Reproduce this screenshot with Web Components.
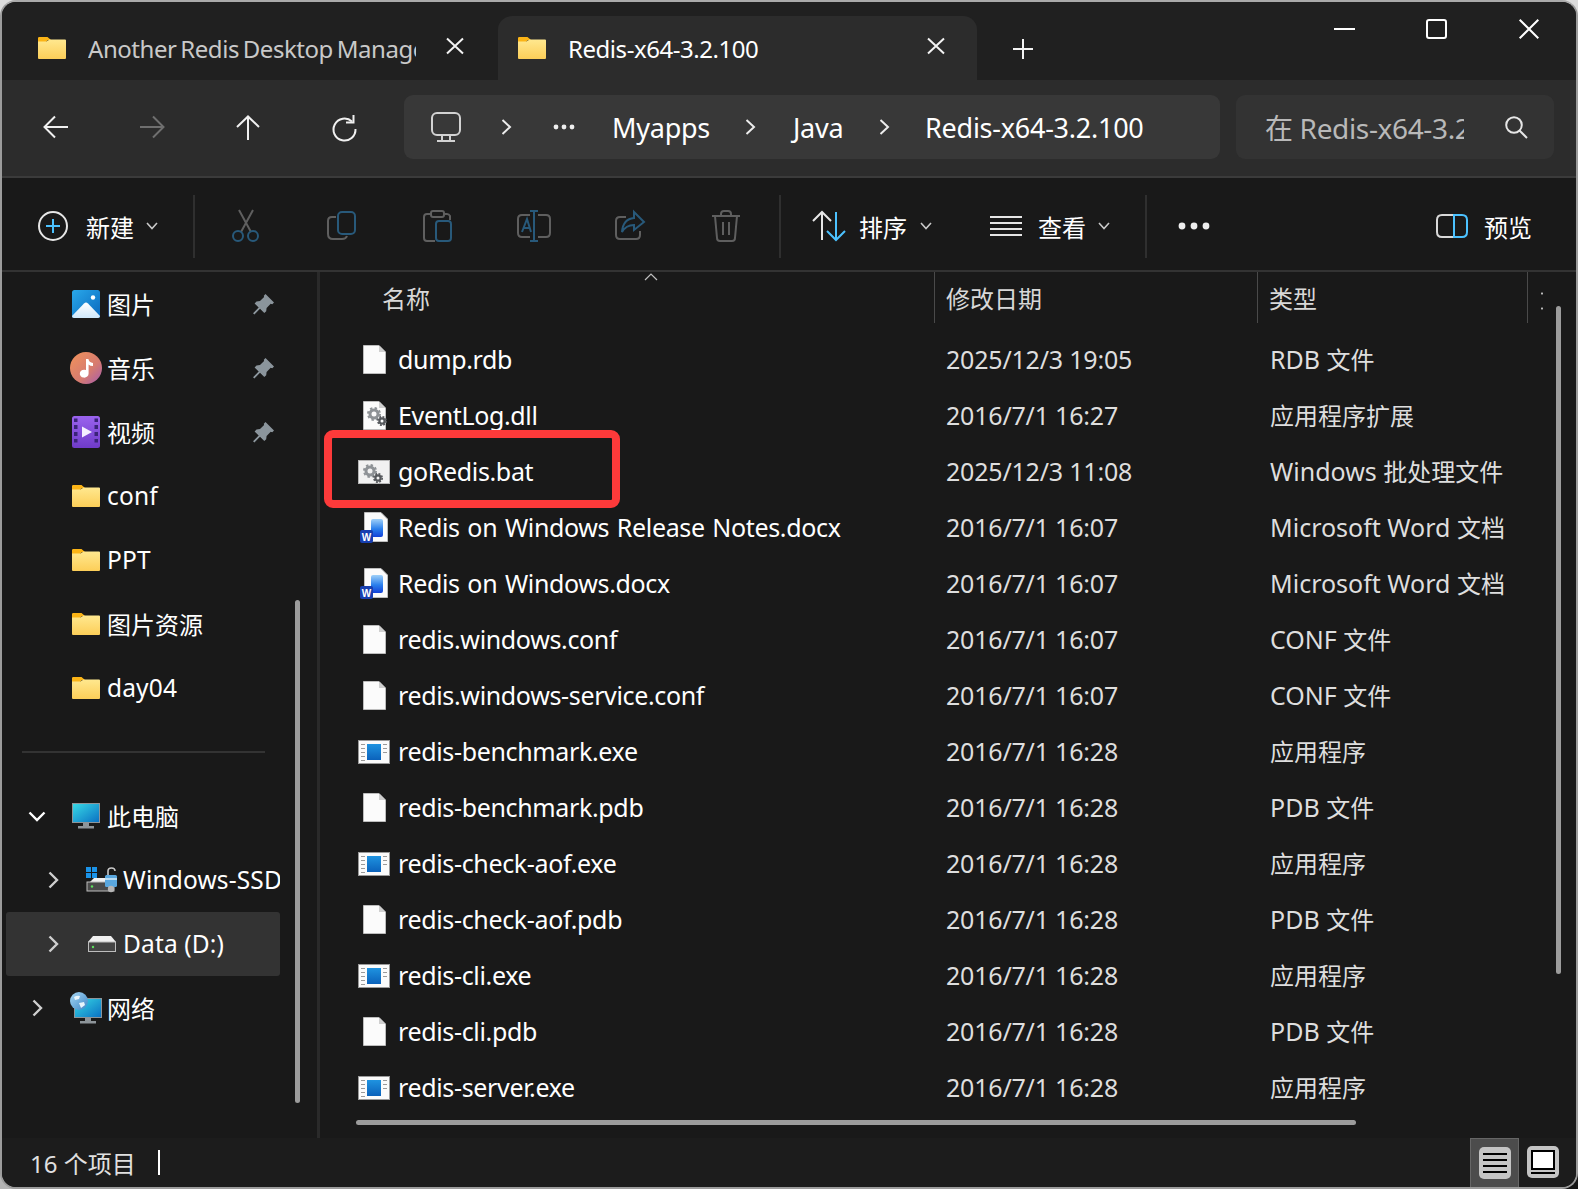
<!DOCTYPE html>
<html lang="zh">
<head>
<meta charset="utf-8">
<title>Redis-x64-3.2.100</title>
<style>
  html, body { margin: 0; height: 100%; }
  body {
    font-family: "Noto Sans", "Noto Sans CJK SC", sans-serif;
    overflow: hidden;
    background:
      linear-gradient(#161616, #161616) right bottom / 20px 20px no-repeat,
      linear-gradient(#b4b4b4, #b4b4b4) left bottom / 20px 20px no-repeat,
      #dcdcdc;
  }
</style>
</head>
<body>
<app-window>
  <title-bar>
    <tab-item slot="tabs">Another Redis Desktop Manager</tab-item>
    <tab-item slot="tabs" active>Redis-x64-3.2.100</tab-item>
  </title-bar>
  <nav-bar></nav-bar>
  <command-bar></command-bar>
  <div slot="body-side">
    <side-bar>
      <side-item icon="pictures" pinned>图片</side-item>
      <side-item icon="music" pinned>音乐</side-item>
      <side-item icon="video" pinned>视频</side-item>
      <side-item icon="folder">conf</side-item>
      <side-item icon="folder">PPT</side-item>
      <side-item icon="folder">图片资源</side-item>
      <side-item icon="folder">day04</side-item>
      <side-item slot="lower" icon="pc" chevron="down">此电脑</side-item>
      <side-item slot="lower" icon="ssd" chevron="right" level="1">Windows-SSD (C:)</side-item>
      <side-item slot="lower" icon="drive" chevron="right" level="1" selected>Data (D:)</side-item>
      <side-item slot="lower" icon="network" chevron="right">网络</side-item>
    </side-bar>
  </div>
  <file-list slot="body-main">
    <file-row icon="blank" date="2025/12/3 19:05" kind="RDB 文件">dump.rdb</file-row>
    <file-row icon="dll" date="2016/7/1 16:27" kind="应用程序扩展">EventLog.dll</file-row>
    <file-row icon="bat" date="2025/12/3 11:08" kind="Windows 批处理文件">goRedis.bat</file-row>
    <file-row icon="word" date="2016/7/1 16:07" kind="Microsoft Word 文档">Redis on Windows Release Notes.docx</file-row>
    <file-row icon="word" date="2016/7/1 16:07" kind="Microsoft Word 文档">Redis on Windows.docx</file-row>
    <file-row icon="blank" date="2016/7/1 16:07" kind="CONF 文件">redis.windows.conf</file-row>
    <file-row icon="blank" date="2016/7/1 16:07" kind="CONF 文件">redis.windows-service.conf</file-row>
    <file-row icon="exe" date="2016/7/1 16:28" kind="应用程序">redis-benchmark.exe</file-row>
    <file-row icon="blank" date="2016/7/1 16:28" kind="PDB 文件">redis-benchmark.pdb</file-row>
    <file-row icon="exe" date="2016/7/1 16:28" kind="应用程序">redis-check-aof.exe</file-row>
    <file-row icon="blank" date="2016/7/1 16:28" kind="PDB 文件">redis-check-aof.pdb</file-row>
    <file-row icon="exe" date="2016/7/1 16:28" kind="应用程序">redis-cli.exe</file-row>
    <file-row icon="blank" date="2016/7/1 16:28" kind="PDB 文件">redis-cli.pdb</file-row>
    <file-row icon="exe" date="2016/7/1 16:28" kind="应用程序">redis-server.exe</file-row>
  </file-list>
  <status-bar slot="status"></status-bar>
</app-window>

<script>
const gears = `
  <circle cx="11" cy="13" r="4" fill="none" stroke="#8e9296" stroke-width="3"/>
  <circle cx="11" cy="13" r="6" fill="none" stroke="#8e9296" stroke-width="2" stroke-dasharray="2.4 2.3"/>
  <circle cx="19" cy="20" r="2.6" fill="none" stroke="#55585c" stroke-width="2.2"/>
  <circle cx="19" cy="20" r="4.2" fill="none" stroke="#55585c" stroke-width="1.6" stroke-dasharray="1.9 1.4"/>`;
const page = (inner) => `<svg width="23" height="29" viewBox="0 0 23 29">
  <path d="M.5.5H16L22.5 7V28.5H.5Z" fill="#fbfbfb" stroke="#bdbdbd"/>
  <path d="M16 .5V7H22.5Z" fill="#cfcfcf"/>${inner}</svg>`;
const folderGrad = `<defs><linearGradient id="f" x1="0" y1="0" x2="0" y2="1"><stop offset="0" stop-color="#ffe88f"/><stop offset="1" stop-color="#fcce58"/></linearGradient></defs>`;

const ICONS = {
  folder: `<svg width="28" height="22" viewBox="0 0 28 22">${folderGrad}
    <path d="M0 1.2Q0 0 1.2 0H9.5L13 3H10L8 5H0Z" fill="#fbb416"/>
    <path d="M0 4.5H8.5L11.5 2.5H27Q28 2.5 28 3.5V21Q28 22 27 22H1Q0 22 0 21Z" fill="url(#f)"/></svg>`,
  close: `<svg width="18" height="16" viewBox="0 0 18 16"><path d="M1 .5L17 15.5M17 .5L1 15.5" stroke="#f2f2f2" stroke-width="2" fill="none"/></svg>`,
  plus: `<svg width="20" height="20" viewBox="0 0 20 20"><path d="M10 0V20M0 10H20" stroke="#f2f2f2" stroke-width="2"/></svg>`,
  min: `<svg width="21" height="2" viewBox="0 0 21 2"><rect width="21" height="2" fill="#fff"/></svg>`,
  max: `<svg width="21" height="20" viewBox="0 0 21 20"><rect x="1" y="1" width="19" height="18" rx="2" fill="none" stroke="#fff" stroke-width="2"/></svg>`,
  winclose: `<svg width="20" height="20" viewBox="0 0 20 20"><path d="M.7.7L19.3 19.3M19.3.7L.7 19.3" stroke="#fff" stroke-width="2" fill="none"/></svg>`,
  back: `<svg width="26" height="24" viewBox="0 0 26 24"><path d="M12 1.5L1.5 12L12 22.5M1.5 12H25" fill="none" stroke="#f0f0f0" stroke-width="2"/></svg>`,
  forward: `<svg width="26" height="24" viewBox="0 0 26 24"><path d="M14 1.5L24.5 12L14 22.5M24.5 12H1" fill="none" stroke="#6f6f6f" stroke-width="2"/></svg>`,
  up: `<svg width="24" height="25" viewBox="0 0 24 25"><path d="M1 12L12 1.5L23 12M12 1.5V25" fill="none" stroke="#f0f0f0" stroke-width="2"/></svg>`,
  refresh: `<svg width="25" height="25" viewBox="0 0 25 25"><path d="M20 6.5A11 11 0 1 0 23.5 14" fill="none" stroke="#f0f0f0" stroke-width="2"/><path d="M21.5 0V7.5H14" fill="none" stroke="#f0f0f0" stroke-width="2"/></svg>`,
  monitor: `<svg width="30" height="30" viewBox="0 0 30 30"><rect x="1" y="1" width="28" height="22" rx="5" fill="none" stroke="#d2d2d2" stroke-width="2"/><path d="M11 23V28M19 23V28M6 29H24" fill="none" stroke="#d2d2d2" stroke-width="2"/></svg>`,
  crumb: `<svg width="11" height="16" viewBox="0 0 11 16"><path d="M1.5 1L9 8L1.5 15" fill="none" stroke="#ececec" stroke-width="2"/></svg>`,
  ell: `<svg width="22" height="6" viewBox="0 0 22 6"><circle cx="3" cy="3" r="2.4" fill="#eee"/><circle cx="11" cy="3" r="2.4" fill="#eee"/><circle cx="19" cy="3" r="2.4" fill="#eee"/></svg>`,
  search: `<svg width="23" height="23" viewBox="0 0 23 23"><circle cx="9" cy="9" r="7.8" fill="none" stroke="#e6e6e6" stroke-width="2"/><path d="M14.5 14.5L22 22" stroke="#e6e6e6" stroke-width="2"/></svg>`,
  add: `<svg width="30" height="30" viewBox="0 0 30 30"><circle cx="15" cy="15" r="14" fill="none" stroke="#e6e6e6" stroke-width="2"/><path d="M15 8V22M8 15H22" stroke="#4cc2ff" stroke-width="2"/></svg>`,
  drop: `<svg width="12" height="8" viewBox="0 0 12 8"><path d="M1 1L6 6.5L11 1" fill="none" stroke="#c8c8c8" stroke-width="1.6"/></svg>`,
  cut: `<svg width="30" height="32" viewBox="0 0 30 32"><path d="M8 0L20 22M22 0L10 22" fill="none" stroke="#5f5f5f" stroke-width="2"/><circle cx="7" cy="26" r="5" fill="none" stroke="#28597a" stroke-width="2"/><circle cx="22" cy="26" r="5" fill="none" stroke="#28597a" stroke-width="2"/></svg>`,
  copy: `<svg width="30" height="30" viewBox="0 0 30 30"><path d="M9 6H5Q1 6 1 10V23Q1 28 6 28H15Q19 28 20 25" fill="none" stroke="#5f5f5f" stroke-width="2"/><rect x="11" y="1" width="17" height="22" rx="4" fill="none" stroke="#28597a" stroke-width="2"/></svg>`,
  paste: `<svg width="30" height="32" viewBox="0 0 30 32"><path d="M8 4H4Q1 4 1 7V28Q1 31 4 31H12M21 4H24Q26 4 27 6V10" fill="none" stroke="#5f5f5f" stroke-width="2"/><rect x="8" y="1" width="13" height="6" rx="2" fill="none" stroke="#5f5f5f" stroke-width="2"/><rect x="13" y="11" width="15" height="20" rx="3" fill="none" stroke="#28597a" stroke-width="2"/></svg>`,
  rename: `<svg width="34" height="32" viewBox="0 0 34 32"><path d="M13 5H5Q1 5 1 9V23Q1 27 5 27H13M21 5H29Q33 5 33 9V23Q33 27 29 27H21" fill="none" stroke="#5f5f5f" stroke-width="2"/><path d="M17 1V31M13 1H21M13 31H21M5 22L10 9L14 22M6.5 18H13" fill="none" stroke="#28597a" stroke-width="2"/></svg>`,
  share: `<svg width="30" height="30" viewBox="0 0 30 30"><path d="M11 6H5Q1 6 1 10V24Q1 28 5 28H21Q25 28 25 24V20" fill="none" stroke="#5f5f5f" stroke-width="2"/><path d="M19 1L29 11L19 19V14Q11 14 7 21Q8 8 19 7Z" fill="none" stroke="#28597a" stroke-width="2"/></svg>`,
  trash: `<svg width="30" height="32" viewBox="0 0 30 32"><path d="M1 6H29M10 6V4Q10 1 13 1H17Q20 1 20 4V6M4 6L6 28Q6 31 9 31H21Q24 31 24 28L26 6M12 12V25M18 12V25" fill="none" stroke="#5f5f5f" stroke-width="2"/></svg>`,
  sort: `<svg width="34" height="30" viewBox="0 0 34 30"><path d="M1 10L10 1L19 10M10 1V29" fill="none" stroke="#e6e6e6" stroke-width="2"/><path d="M15 20L24 29L33 20M24 1V29" fill="none" stroke="#4cc2ff" stroke-width="2"/></svg>`,
  lines: `<svg width="32" height="20" viewBox="0 0 32 20"><path d="M0 1H32M0 7H32M0 13H32M0 19H32" stroke="#e6e6e6" stroke-width="2"/></svg>`,
  dots: `<svg width="32" height="8" viewBox="0 0 32 8"><circle cx="4" cy="4" r="3.4" fill="#eee"/><circle cx="16" cy="4" r="3.4" fill="#eee"/><circle cx="28" cy="4" r="3.4" fill="#eee"/></svg>`,
  preview: `<svg width="32" height="24" viewBox="0 0 32 24"><path d="M18 1H6Q1 1 1 6V18Q1 23 6 23H18" fill="none" stroke="#d8d8d8" stroke-width="2"/><path d="M18 0V24M18 1H26Q31 1 31 6V18Q31 23 26 23H18" fill="none" stroke="#4cc2ff" stroke-width="2"/></svg>`,
  pin: `<svg width="21" height="21" viewBox="0 0 21 21"><path d="M12.5 0L21 8.5L19.3 10.2L17.7 9.8L13.6 13.9L13.2 17.2L11.3 19.1L7 14.8L1.4 20.6L0 19.3L5.7 13.5L1.6 9.4L3.5 7.5L7 7.1L11.1 3L10.8 1.7Z" fill="#8b959c"/></svg>`,
  pictures: `<svg width="28" height="28" viewBox="0 0 28 28"><defs><linearGradient id="p" x1="0" y1="0" x2="1" y2="1"><stop offset="0" stop-color="#29a8ea"/><stop offset="1" stop-color="#0a68bd"/></linearGradient><linearGradient id="s" x1="0" y1="0" x2="0" y2="1"><stop offset="0" stop-color="#fff"/><stop offset="1" stop-color="#cfe8fb"/></linearGradient></defs>
    <rect width="28" height="28" rx="2.5" fill="url(#p)"/><circle cx="21" cy="7.5" r="2.2" fill="#fff"/><path d="M0 26L12 13.5Q14 11.5 16 13.5L28 26V26Q28 28 26 28H2Q0 28 0 26Z" fill="url(#s)"/></svg>`,
  music: `<svg width="32" height="32" viewBox="0 0 32 32"><defs><linearGradient id="m" x1="0" y1="0" x2="1" y2="1"><stop offset="0" stop-color="#f2935a"/><stop offset=".6" stop-color="#d67b70"/><stop offset="1" stop-color="#a45bb0"/></linearGradient></defs>
    <circle cx="16" cy="16" r="16" fill="url(#m)"/><path d="M16 7H18.4Q19 10.5 23 11V14Q20 14 18.6 12.5V21.5A4.4 4 0 1 1 16 18Z" fill="#fff"/></svg>`,
  video: `<svg width="28" height="32" viewBox="0 0 28 32"><defs><linearGradient id="v" x1="0" y1="0" x2="0" y2="1"><stop offset="0" stop-color="#9a63ee"/><stop offset="1" stop-color="#6f3bc8"/></linearGradient></defs>
    <rect width="28" height="32" rx="2.5" fill="url(#v)"/>
    <path d="M2 2.5H5.5V6H2ZM2 9H5.5V13H2ZM2 16H5.5V20H2ZM2 23H5.5V26.5H2ZM22.5 2.5H26V6H22.5ZM22.5 9H26V13H22.5ZM22.5 16H26V20H22.5ZM22.5 23H26V26.5H22.5Z" fill="#3a2378"/>
    <path d="M10 10.5L20 16L10 21.5Z" fill="#f4f0ff"/></svg>`,
  pc: `<svg width="28" height="26" viewBox="0 0 28 26"><defs><linearGradient id="c" x1="0" y1="0" x2="1" y2="1"><stop offset="0" stop-color="#38dbe6"/><stop offset="1" stop-color="#0a6fc2"/></linearGradient></defs>
    <rect x=".5" y=".5" width="27" height="19" fill="url(#c)" stroke="#8d9499"/><path d="M11 20H17V23H22V25.5H6V23H11Z" fill="#8d9499"/></svg>`,
  ssd: `<svg width="32" height="26" viewBox="0 0 32 26"><path d="M4 15L8 11H24V15Z" fill="#f0f0f0"/><rect x="1" y="15" width="27" height="9" fill="#4a4a4a" stroke="#bdbdbd"/><circle cx="6" cy="19.5" r="1.2" fill="#5ee05e"/>
    <path d="M0 0H5V5H0ZM6 0H11V5H6ZM0 6H5V11H0ZM6 6H11V11H6Z" fill="#1b93e8"/>
    <path d="M22 8V4Q22 1 25.5 1Q29 1 29 4" fill="none" stroke="#c8c8c8" stroke-width="1.6"/><rect x="19" y="8" width="12" height="12" rx="1.5" fill="#5aa7de"/><path d="M19 12H31" stroke="#d8ecfa" stroke-width="1.4"/><circle cx="25" cy="22" r="3.2" fill="#b5b5b5"/></svg>`,
  drive: `<svg width="28" height="16" viewBox="0 0 28 16"><path d="M0 6L5 0H23L28 6Z" fill="#f0f0f0"/><rect x=".5" y="6" width="27" height="9.5" fill="#444" stroke="#bdbdbd"/><circle cx="5" cy="11" r="1.2" fill="#5ee05e"/></svg>`,
  network: `<svg width="32" height="32" viewBox="0 0 32 32"><defs><linearGradient id="c" x1="0" y1="0" x2="1" y2="1"><stop offset="0" stop-color="#38dbe6"/><stop offset="1" stop-color="#0a6fc2"/></linearGradient><linearGradient id="g" x1="0" y1="0" x2="1" y2="1"><stop offset="0" stop-color="#a8d8f5"/><stop offset="1" stop-color="#3d86c6"/></linearGradient></defs>
    <rect x="4.5" y="6.5" width="27" height="19" fill="url(#c)" stroke="#8d9499"/><path d="M15 26H21V29H26V31.5H10V29H15Z" fill="#8d9499"/>
    <circle cx="9" cy="9" r="9" fill="url(#g)"/><path d="M4 5Q7 3 10 4L9 7L5 8ZM9 11L14 10L15 13L11 16Z" fill="#e9f5fc"/></svg>`,
  blank: page(''),
  dll: page(gears),
  bat: `<svg width="32" height="24" viewBox="0 0 32 24"><rect x=".5" y=".5" width="31" height="23" fill="#f1f1f1" stroke="#b5b5b5"/><g transform="translate(1 -2)">${gears}</g></svg>`,
  word: `<svg width="28" height="31" viewBox="0 0 28 31"><defs><linearGradient id="b" x1="0" y1="0" x2="0" y2="1"><stop offset="0" stop-color="#9fd0f8"/><stop offset=".55" stop-color="#2a7fec"/><stop offset="1" stop-color="#1340d8"/></linearGradient></defs>
    <path d="M4.5.5H21L27.5 7V29.5H4.5Z" fill="#fbfbfb" stroke="#bdbdbd"/>
    <rect x="11" y="7" width="12" height="18" rx="2" fill="url(#b)"/>
    <rect x="0" y="18" width="13" height="13" rx="2" fill="#173fb0"/>
    <text x="6.5" y="28.5" text-anchor="middle" font-family="Liberation Sans" font-weight="700" font-size="10" fill="#fff">W</text></svg>`,
  exe: `<svg width="32" height="24" viewBox="0 0 32 24"><rect x=".5" y=".5" width="31" height="23" fill="#fbfbfb" stroke="#9a9a9a"/>
    <defs><linearGradient id="e" x1="0" y1="0" x2="0" y2="1"><stop offset="0" stop-color="#1f93e0"/><stop offset="1" stop-color="#0b62bb"/></linearGradient></defs>
    <rect x="9" y="4" width="14" height="16" fill="url(#e)"/>
    <path d="M3 4.5H7M3 8.5H7M3 12.5H7M3 16.5H7M3 20.5H7M25 4.5H29M25 8.5H29M25 12.5H29" stroke="#9a9a9a" stroke-width="1.2"/></svg>`,
  detail: `<svg width="32" height="32" viewBox="0 0 32 32"><rect width="32" height="32" rx="5" fill="#c4c4c4"/><path d="M4 7H28M4 13H28M4 19H28M4 25H28" stroke="#000" stroke-width="2"/></svg>`,
  large: `<svg width="32" height="32" viewBox="0 0 32 32"><rect width="32" height="32" rx="5" fill="#c4c4c4"/><rect x="5" y="5" width="22" height="18" fill="#fff" stroke="#000" stroke-width="2"/><path d="M4 27H28" stroke="#000" stroke-width="2"/></svg>`
};

customElements.define("win-icon", class extends HTMLElement {
  constructor() {
    super();
    this.attachShadow({ mode: 'open' });
  }
  connectedCallback() {
    this.shadowRoot.innerHTML = `
      <style>:host { display: inline-flex; flex: none; align-items: center; justify-content: center; }
      svg { display: block; overflow: visible; }</style>
      ${ICONS[this.getAttribute('name')] || ''}`;
  }
});

customElements.define("app-window", class extends HTMLElement {
  constructor() {
    super();
    this.attachShadow({ mode: 'open' }).innerHTML = `
      <style>
      :host {
        display: flex;
        flex-direction: column;
        width: 1578px;
        height: 1189px;
        box-sizing: border-box;
        border: 2px solid #9c9c9c;
        border-top-color: #aaa;
        border-radius: 16px;
        background: #191919;
        color: #fff;
        overflow: hidden;
      }
      .body { flex: 1; display: flex; min-height: 0; }
      </style>
      <slot></slot>
      <div class="body"><slot name="body-side"></slot><slot name="body-main"></slot></div>
      <slot name="status"></slot>`;
  }
});

customElements.define("tab-item", class extends HTMLElement {
  constructor() {
    super();
    this.attachShadow({ mode: 'open' }).innerHTML = `
      <style>
      :host {
        display: flex;
        align-items: center;
        box-sizing: border-box;
        width: 479px;
        height: 64px;
        padding: 0 0 0 19px;
        font-size: 24px;
        letter-spacing: var(--track);
        word-spacing: -2px;
        color: #c9c9c9;
      }
      :host([active]) {
        background: #2c2c2c;
        border-radius: 14px 14px 0 0;
        color: #fff;
        padding-left: 20px;
      }
      .label { width: 328px; margin: 0 30px 0 22px; white-space: nowrap; overflow: hidden; }
      :host([active]) .label { margin-right: 31px; }
      win-icon[name=close] { margin-top: -4px; }
      </style>
      <win-icon name="folder"></win-icon>
      <span class="label"><slot></slot></span>
      <win-icon name="close"></win-icon>`;
  }
});

customElements.define("title-bar", class extends HTMLElement {
  constructor() {
    super();
    this.attachShadow({ mode: 'open' }).innerHTML = `
      <style>
      :host {
        display: flex;
        flex: none;
        height: 78px;
        box-sizing: border-box;
        padding: 14px 0 0 17px;
        background: #202020;
        --track: -.45px;
      }
      .plus { margin: 23px 0 0 36px; align-self: flex-start; }
      .controls { margin-left: auto; display: flex; align-items: flex-start; margin-top: 3px; }
      .controls win-icon { height: 20px; width: 92px; }
      .controls win-icon:last-child { margin: 0 1px 0 1px; }
      </style>
      <slot name="tabs"></slot>
      <win-icon class="plus" name="plus"></win-icon>
      <div class="controls">
        <win-icon name="min"></win-icon>
        <win-icon name="max"></win-icon>
        <win-icon name="winclose"></win-icon>
      </div>`;
  }
});

customElements.define("nav-bar", class extends HTMLElement {
  constructor() {
    super();
    this.attachShadow({ mode: 'open' }).innerHTML = `
      <style>
      :host {
        display: flex;
        flex: none;
        align-items: center;
        height: 98px;
        box-sizing: border-box;
        padding: 0 0 2px 6px;
        background: #2c2c2c;
        border-bottom: 2px solid #3b3b3b;
      }
      .btn { width: 96px; display: flex; justify-content: center; }
      .address, .search {
        height: 64px;
        display: flex;
        align-items: center;
        box-sizing: border-box;
        border-radius: 9px;
        font-size: 27px;
        letter-spacing: -.25px;
      }
      .address { width: 816px; margin-left: 12px; padding-left: 27px; background: #383838; color: #fff; }
      .address .chev { margin-left: 40px; }
      .address .ell { margin: 0 37px 0 41px; }
      .crumb { white-space: nowrap; }
      .crumb.a { width: 133px; }
      .crumb.b { width: 86px; }
      .next.a { margin-right: 37px; }
      .next.b { margin-right: 35px; }
      .search { width: 318px; margin-left: 16px; padding-left: 29px; background: #333; color: #b9b9b9; font-size: 28px; letter-spacing: -.35px; }
      .search span { width: 199px; overflow: hidden; white-space: nowrap; }
      .search win-icon { margin-left: 41px; }
      </style>
      <div class="btn"><win-icon name="back"></win-icon></div>
      <div class="btn"><win-icon name="forward"></win-icon></div>
      <div class="btn"><win-icon name="up"></win-icon></div>
      <div class="btn"><win-icon name="refresh"></win-icon></div>
      <div class="address">
        <win-icon name="monitor"></win-icon>
        <win-icon class="chev" name="crumb"></win-icon>
        <win-icon class="ell" name="ell"></win-icon>
        <span class="crumb a">Myapps</span>
        <win-icon class="next a" name="crumb"></win-icon>
        <span class="crumb b">Java</span>
        <win-icon class="next b" name="crumb"></win-icon>
        <span class="crumb">Redis-x64-3.2.100</span>
      </div>
      <div class="search">
        <span>在 Redis-x64-3.2.100 中搜索</span>
        <win-icon name="search"></win-icon>
      </div>`;
  }
});

customElements.define("command-bar", class extends HTMLElement {
  constructor() {
    super();
    this.attachShadow({ mode: 'open' }).innerHTML = `
      <style>
      :host {
        display: flex;
        flex: none;
        align-items: center;
        height: 94px;
        box-sizing: border-box;
        padding: 4px 44px 0 36px;
        background: #191919;
        border-bottom: 2px solid #333;
        font-size: 24px;
        color: #fff;
      }
      .sep { width: 2px; height: 63px; background: #2f2f2f; flex: none; }
      .tool { width: 96px; display: flex; justify-content: center; }
      .t { width: 48px; white-space: nowrap; }
      .push { margin-left: auto; }
      </style>
      <win-icon name="add"></win-icon>
      <span class="t" style="margin-left:18px">新建</span>
      <win-icon name="drop" style="margin-left:12px"></win-icon>
      <div class="sep" style="margin:0 3px 0 35px"></div>
      <div class="tool"><win-icon name="cut"></win-icon></div>
      <div class="tool"><win-icon name="copy"></win-icon></div>
      <div class="tool"><win-icon name="paste"></win-icon></div>
      <div class="tool"><win-icon name="rename"></win-icon></div>
      <div class="tool"><win-icon name="share"></win-icon></div>
      <div class="tool"><win-icon name="trash"></win-icon></div>
      <div class="sep" style="margin:0 31px 0 5px"></div>
      <win-icon name="sort"></win-icon>
      <span class="t" style="margin-left:13px">排序</span>
      <win-icon name="drop" style="margin-left:13px"></win-icon>
      <win-icon name="lines" style="margin-left:58px"></win-icon>
      <span class="t" style="margin-left:16px">查看</span>
      <win-icon name="drop" style="margin-left:12px"></win-icon>
      <div class="sep" style="margin:0 31px 0 35px"></div>
      <win-icon name="dots"></win-icon>
      <win-icon class="push" name="preview"></win-icon>
      <span class="t" style="margin-left:16px">预览</span>`;
  }
});

customElements.define("side-item", class extends HTMLElement {
  constructor() {
    super();
    this.attachShadow({ mode: 'open' });
  }
  connectedCallback() {
    const chevron = this.getAttribute('chevron');
    const chevSvg = chevron === 'down'
      ? `<svg width="18" height="11" viewBox="0 0 18 11"><path d="M1.5 1.5L9 9L16.5 1.5" fill="none" stroke="#fff" stroke-width="2.4"/></svg>`
      : chevron === 'right'
        ? `<svg width="11" height="18" viewBox="0 0 11 18"><path d="M1.5 1.5L9 9L1.5 16.5" fill="none" stroke="#cfcfcf" stroke-width="2.4"/></svg>`
        : '';
    const latin = !/[^\x00-\x7f]/.test(this.textContent);
    this.shadowRoot.innerHTML = `
      <style>
      :host {
        display: flex;
        align-items: center;
        height: 64px;
        width: 274px;
        box-sizing: border-box;
        padding-right: 6px;
        border-radius: 3px;
        overflow: hidden;
        font-size: ${latin ? '24.5px' : '24px'};
        letter-spacing: ${latin ? '.15px' : '0'};
        color: #fff;
        white-space: nowrap;
      }
      :host([selected]) { background: #333; padding-right: 0; }
      .chev {
        flex: none;
        box-sizing: border-box;
        width: 66px;
        padding-right: 4px;
        display: flex;
        justify-content: center;
      }
      :host([level="1"]) .chev { width: 82px; padding: 0 0 0 12px; }
      .ic { flex: none; width: 28px; display: flex; justify-content: center; margin-right: 7px; }
      .ic win-icon { margin: 0 -4px; }
      .label { margin-bottom: 2px; }
      .pin { margin-left: auto; }
      </style>
      <span class="chev">${chevSvg}</span>
      <span class="ic"><win-icon name="${this.getAttribute('icon')}"></win-icon></span>
      <span class="label"><slot></slot></span>
      ${this.hasAttribute('pinned') ? '<win-icon class="pin" name="pin"></win-icon>' : ''}`;
  }
});

customElements.define("side-bar", class extends HTMLElement {
  constructor() {
    super();
    this.attachShadow({ mode: 'open' }).innerHTML = `
      <style>
      :host {
        display: block;
        position: relative;
        width: 318px;
        height: 100%;
        box-sizing: border-box;
        padding: 0 0 0 4px;
        border-right: 3px solid #2a2a2a;
      }
      .rule { height: 2px; width: 243px; margin: 31px 0 31px 16px; background: #333; }
      .thumb {
        position: absolute;
        left: 293px;
        top: 328px;
        width: 5px;
        height: 503px;
        border-radius: 3px;
        background: #9c9c9c;
      }
      </style>
      <slot></slot>
      <div class="rule"></div>
      <slot name="lower"></slot>
      <div class="thumb"></div>`;
  }
});

customElements.define("file-row", class extends HTMLElement {
  constructor() {
    super();
    this.attachShadow({ mode: 'open' });
  }
  connectedCallback() {
    // CJK runs sit a touch smaller than the latin text around them
    const kind = this.getAttribute('kind').replace(/[\u4e00-\u9fff]+/g, (m) => `<span class="cjk">${m}</span>`);
    this.shadowRoot.innerHTML = `
      <style>
      :host {
        display: grid;
        grid-template-columns: 40px 548px 324px 1fr;
        align-items: center;
        height: 56px;
        font-size: 25px;
        white-space: nowrap;
        color: #fff;
      }
      .ic { display: flex; justify-content: center; padding-right: 8px; margin-top: 1px; }
      .name { letter-spacing: -.35px; word-spacing: 1.5px; }
      .meta { color: #dedede; letter-spacing: -.2px; }
      .kind { color: #dedede; margin-bottom: 2px; }
      .cjk { font-size: 24px; }
      </style>
      <span class="ic"><win-icon name="${this.getAttribute('icon')}"></win-icon></span>
      <span class="name"><slot></slot></span>
      <span class="meta">${this.getAttribute('date')}</span>
      <span class="kind">${kind}</span>`;
  }
});

customElements.define("file-list", class extends HTMLElement {
  constructor() {
    super();
    this.attachShadow({ mode: 'open' }).innerHTML = `
      <style>
      :host {
        display: block;
        position: relative;
        flex: 1;
        min-width: 0;
        overflow: hidden;
        padding-left: 38px;
      }
      .head {
        display: grid;
        grid-template-columns: 24px 552px 323px 270px 1fr;
        height: 51px;
        margin-bottom: 8px;
        font-size: 24px;
        color: #d8d8d8;
      }
      .head span { display: flex; align-items: center; box-sizing: border-box; white-space: nowrap; }
      .cell { border-left: 1px solid #4a4a4a; padding-left: 11px; }
      .caret { position: absolute; left: 324px; top: 1px; }
      .markup { position: absolute; left: 1221px; top: 14px; width: 2px; height: 30px;
        background: radial-gradient(circle, #bbb 1px, transparent 1.2px) 0 0 / 2px 15px; }
      .vbar { position: absolute; left: 1236px; top: 34px; width: 5px; height: 668px; border-radius: 3px; background: #9c9c9c; }
      .hbar { position: absolute; left: 36px; top: 848px; width: 1000px; height: 5px; border-radius: 3px; background: #9c9c9c; }
      .mark {
        position: absolute;
        left: 4px;
        top: 158px;
        width: 296px;
        height: 78px;
        box-sizing: border-box;
        border: 8px solid #fd3a3a;
        border-radius: 9px;
      }
      </style>
      <div class="head">
        <span></span>
        <span>名称</span>
        <span class="cell">修改日期</span>
        <span class="cell">类型</span>
        <span class="cell"></span>
      </div>
      <svg class="caret" width="14" height="8" viewBox="0 0 14 8"><path d="M1 7L7 1L13 7" fill="none" stroke="#c0c0c0" stroke-width="1.2"/></svg>
      <div class="markup"></div>
      <slot></slot>
      <div class="vbar"></div>
      <div class="hbar"></div>
      <div class="mark"></div>`;
  }
});

customElements.define("status-bar", class extends HTMLElement {
  constructor() {
    super();
    this.attachShadow({ mode: 'open' }).innerHTML = `
      <style>
      :host {
        display: flex;
        flex: none;
        align-items: center;
        height: 49px;
        padding-left: 28px;
        background: #1c1c1c;
        font-size: 24px;
        color: #e0e0e0;
      }
      .caret { width: 2px; height: 25px; margin-left: 22px; background: #fff; }
      .views { margin-left: auto; display: flex; align-items: stretch; height: 49px; }
      .on { width: 49px; box-sizing: border-box; display: flex; align-items: center; justify-content: center; background: #4c4c4c; border: 1px solid #666; border-bottom: 0; }
      .off { width: 32px; padding-top: 8px; box-sizing: border-box; display: flex; align-items: flex-start; margin: 0 17px 0 8px; }
      </style>
      <span>16 个项目</span>
      <span class="caret"></span>
      <div class="views">
        <div class="on"><win-icon name="detail"></win-icon></div>
        <div class="off"><win-icon name="large"></win-icon></div>
      </div>`;
  }
});
</script>
</body>
</html>
